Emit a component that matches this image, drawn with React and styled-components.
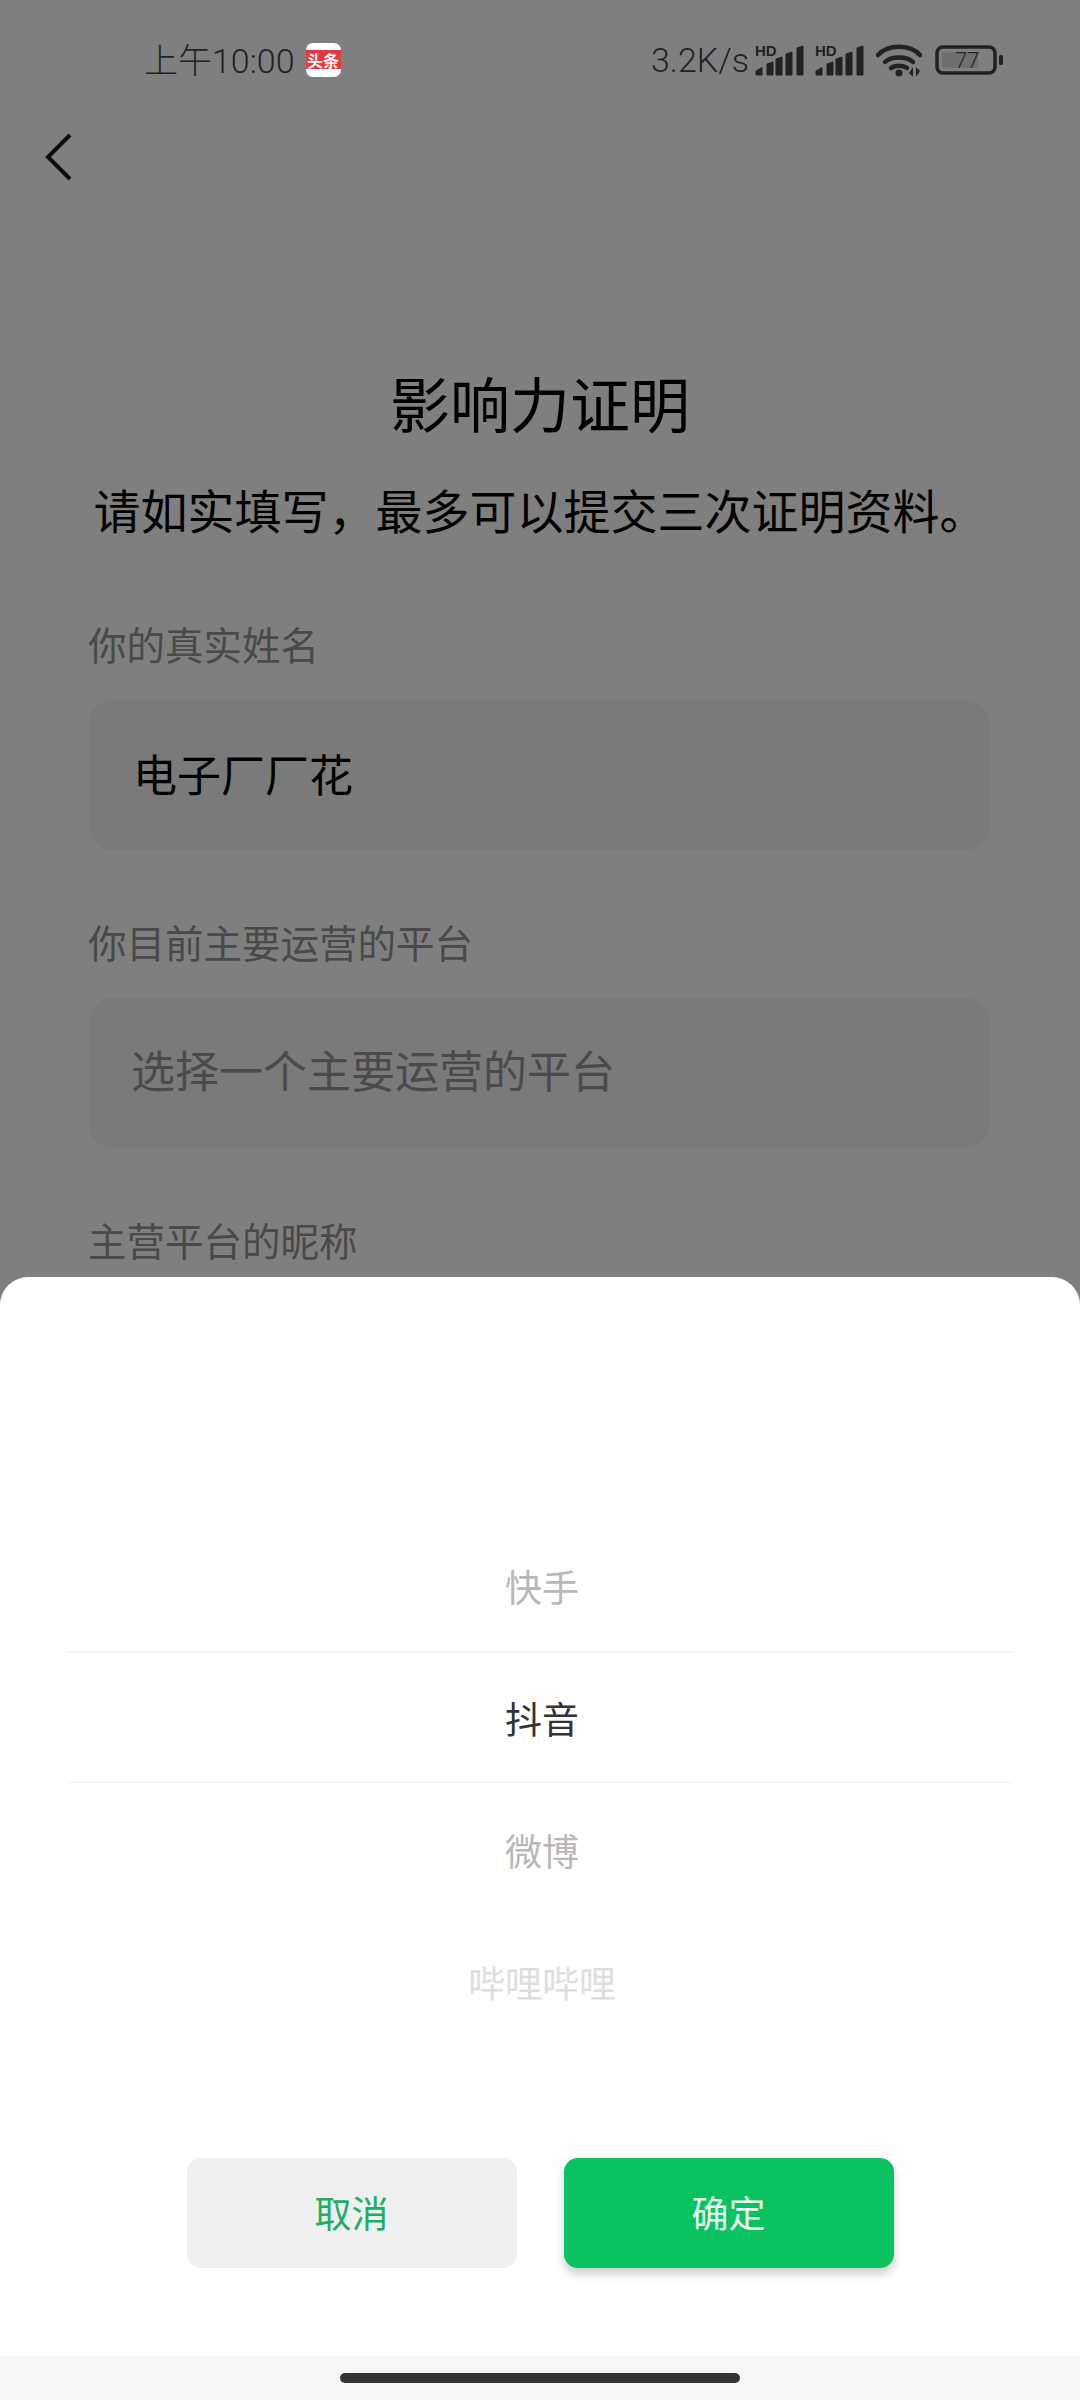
import styled, { createGlobalStyle } from "styled-components";

const GlobalStyle = createGlobalStyle`
  html, body {
    margin: 0;
    padding: 0;
    background: #fff;
    font-family: "Noto Sans CJK SC", "Liberation Sans", sans-serif;
  }
  * {
    box-sizing: border-box;
  }
`;

const Page = styled.div`
  position: relative;
  width: 1080px;
  height: 2400px;
  overflow: hidden;
  background: #fff;
`;
const Scrim = styled.div`
  position: absolute;
  inset: 0;
  background: rgba(0, 0, 0, 0.5);
`;

const StatusBar = styled.div`
  position: relative;
  z-index: 2;
  display: flex;
  align-items: center;
  justify-content: space-between;
  height: 120px;
  padding: 0 77px 0 144px;
  color: #222;
`;
const StatusLeft = styled.div`
  display: flex;
  align-items: center;
  gap: 11px;
`;
const Clock = styled.span`
  padding-top: 2px;
  font-size: 34px;
  line-height: 40px;
  font-weight: 300;
  font-family: Roboto, "Noto Sans CJK SC", sans-serif;
`;
const NewsBadge = styled.span`
  display: flex;
  align-items: center;
  justify-content: center;
  width: 35px;
  height: 34px;
  border-radius: 7px;
  background: linear-gradient(#fff 0 20%, #e8373f 20% 76%, #fff 76%);
  color: #fff;
  font-size: 16px;
  line-height: 16px;
  font-weight: 700;
  white-space: nowrap;
`;
const StatusRight = styled.div`
  display: flex;
  align-items: center;
  gap: 6px;
`;
const Speed = styled.span`
  font-family: Roboto, sans-serif;
  font-size: 34px;
  line-height: 40px;
  font-weight: 300;
`;
const SignalGroup = styled.div`
  display: flex;
  gap: 11px;
  margin-right: 6px;
`;
const HdText = styled.text`
  font-family: "Liberation Sans", sans-serif;
  font-size: 15px;
  font-weight: 700;
  fill: #222;
`;
const BatteryText = styled.text`
  font-family: Roboto, sans-serif;
  font-size: 22px;
  font-weight: 300;
  fill: #222;
`;
const BatterySvg = styled.svg`
  margin-left: 7px;
`;

const BackRow = styled.div`
  display: flex;
  height: 60px;
  margin-top: 7px;
  padding-left: 41px;
  align-items: center;
`;
const Header = styled.div`
  position: relative;
  display: flex;
  flex-direction: column;
  align-items: center;
  margin-top: 175px;
`;
const Title = styled.h1`
  margin: 0;
  font-size: 60px;
  line-height: 80px;
  font-weight: 400;
  color: #000;
`;
const Subtitle = styled.p`
  margin: 37px 0 0;
  font-size: 47px;
  line-height: 60px;
  font-weight: 400;
  color: #000;
  white-space: nowrap;
`;
const Form = styled.div`
  display: flex;
  flex-direction: column;
  gap: 66px;
  margin-top: 79px;
  padding: 0 90px 0 89px;
`;
const Field = styled.div`
  display: flex;
  flex-direction: column;
  gap: 32px;
`;
const Label = styled.div`
  margin-left: -1px;
  font-size: 38.5px;
  line-height: 50px;
  color: #929292;
`;
const InputBox = styled.div`
  display: flex;
  align-items: center;
  height: 150px;
  padding: 0 42px ${(p) => (p.$placeholder ? "9px" : "5px")} ${(p) => (p.$placeholder ? "42px" : "44px")};
  border-radius: 24px;
  background: #f4f4f4;
  font-size: 44px;
  color: ${(p) => (p.$placeholder ? "#959595" : "#000")};
`;

const Sheet = styled.div`
  position: absolute;
  left: 0;
  right: 0;
  bottom: 0;
  display: flex;
  flex-direction: column;
  height: 1123px;
  padding-top: 242px;
  border-radius: 28px 28px 0 0;
  background: #fff;
`;
const Picker = styled.div`
  display: flex;
  flex-direction: column;
  margin: 0 67px;
`;
const PickerRow = styled.div`
  display: flex;
  align-items: center;
  justify-content: center;
  height: 132px;
  padding: 2px 0 0 4px;
  font-size: 37px;
  color: ${(p) => p.$tone};
  border-top: ${(p) => (p.$selected ? "2px solid #f3f3f3" : "none")};
  border-bottom: ${(p) => (p.$selected ? "2px solid #f3f3f3" : "none")};
`;
const Actions = styled.div`
  display: flex;
  justify-content: center;
  gap: 47px;
  margin-top: 111px;
`;
const ActionButton = styled.button`
  width: 330px;
  height: 110px;
  padding: 0 0 3px;
  border: none;
  border-radius: 14px;
  font-family: inherit;
  font-size: 37px;
  background: ${(p) => (p.$primary ? "#0ac360" : "#f0f0f0")};
  color: ${(p) => (p.$primary ? "#e6fbef" : "#1fae63")};
  box-shadow: ${(p) => (p.$primary ? "0 6px 10px rgba(0, 0, 0, 0.2)" : "none")};
`;
const NavBar = styled.div`
  display: flex;
  justify-content: center;
  height: 44px;
  margin-top: auto;
  padding-top: 17px;
  background: #f6f6f6;
`;
const HomeIndicator = styled.div`
  width: 400px;
  height: 10px;
  border-radius: 5px;
  background: #333;
`;

const SignalIcon = () => (
  <svg width="49" height="34" viewBox="0 0 49 34">
    <HdText x="0" y="13">HD</HdText>
    <path
      d="M1 32v-4l6-3.500v7.500zM12 32V21l6-2v13zM21 32V16l6-2v18zM31 32V11l6-2v23zM42 32V5l6-2v29z"
      fill="#222"
      stroke="#222"
      strokeWidth="1"
      strokeLinejoin="round"
    />
  </svg>
);

const WifiIcon = () => (
  <svg width="46" height="34" viewBox="0 0 46 34" fill="none" stroke="#222" strokeWidth="4.5" strokeLinecap="round">
    <path d="M2 12C12 1 34 1 44 12" />
    <path d="M9 19c6-6 22-6 28 0" />
    <path d="M15 25c4-3 12-3 16 0" />
    <circle cx="23" cy="30" r="3.500" fill="#222" stroke="none" />
    <path d="M37 24v10l-4-4zM40 34V24l4 4z" fill="#222" stroke="none" />
  </svg>
);

const BatteryIcon = () => (
  <BatterySvg width="68" height="30" viewBox="0 0 68 30">
    <rect x="2" y="2" width="58" height="26" rx="6" fill="none" stroke="#222" strokeWidth="3.500" />
    <rect x="7" y="7" width="36" height="16" rx="2" fill="#6f6f6f" />
    <BatteryText x="20" y="23">77</BatteryText>
    <rect x="64" y="10" width="4" height="10" rx="1.500" fill="#222" />
  </BatterySvg>
);

const BackIcon = () => (
  <svg width="32" height="50" viewBox="0 0 32 50" fill="none" stroke="#1a1a1a" strokeWidth="4">
    <path d="M29 3L7 25l22 22" />
  </svg>
);

const App = () => {
  return (
    <Page>
      <GlobalStyle />
      <Scrim />
      <StatusBar>
        <StatusLeft>
          <Clock>上午10:00</Clock>
          <NewsBadge>头条</NewsBadge>
        </StatusLeft>
        <StatusRight>
          <Speed>3.2K/s</Speed>
          <SignalGroup>
            <SignalIcon />
            <SignalIcon />
          </SignalGroup>
          <WifiIcon />
          <BatteryIcon />
        </StatusRight>
      </StatusBar>
      <BackRow>
        <BackIcon />
      </BackRow>
      <Header>
        <Title>影响力证明</Title>
        <Subtitle>请如实填写，最多可以提交三次证明资料。</Subtitle>
      </Header>
      <Form>
        <Field>
          <Label>你的真实姓名</Label>
          <InputBox>电子厂厂花</InputBox>
        </Field>
        <Field>
          <Label>你目前主要运营的平台</Label>
          <InputBox $placeholder>选择一个主要运营的平台</InputBox>
        </Field>
        <Field>
          <Label>主营平台的昵称</Label>
        </Field>
      </Form>
      <Sheet>
        <Picker>
          <PickerRow $tone="#b8b8b8">快手</PickerRow>
          <PickerRow $tone="#333" $selected>抖音</PickerRow>
          <PickerRow $tone="#b8b8b8">微博</PickerRow>
          <PickerRow $tone="#dedede">哔哩哔哩</PickerRow>
        </Picker>
        <Actions>
          <ActionButton>取消</ActionButton>
          <ActionButton $primary>确定</ActionButton>
        </Actions>
        <NavBar>
          <HomeIndicator />
        </NavBar>
      </Sheet>
    </Page>
  );
};

export default App;
